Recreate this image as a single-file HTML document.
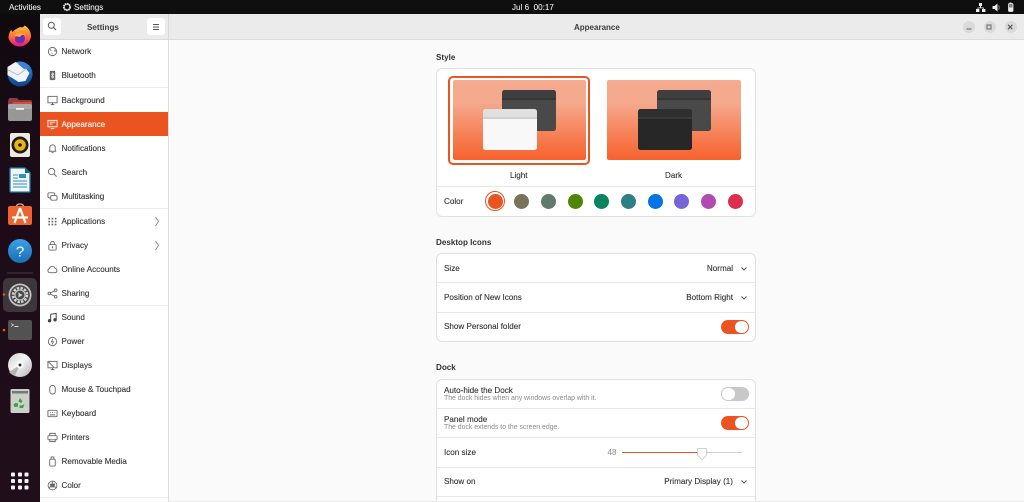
<!DOCTYPE html>
<html><head><meta charset="utf-8"><title>Settings</title>
<style>
html,body{margin:0;padding:0;width:1024px;height:502px;overflow:hidden;background:#fafafa}
body{position:relative;font-family:"Liberation Sans",sans-serif;font-size:8.1px;color:#333;filter:blur(.3px)}
.a{position:absolute}
.t{position:absolute;white-space:nowrap;line-height:12px;margin-top:.5px;-webkit-text-stroke:.12px currentColor}
.b{font-weight:bold;-webkit-text-stroke:0}
.line{position:absolute;background:#e6e6e6;height:1px}
.card{position:absolute;left:436px;width:320px;background:#fff;border:1px solid #e0e0e0;border-radius:6px;box-sizing:border-box}
.dot{position:absolute;width:15px;height:15px;border-radius:50%;top:194px}
.tog{position:absolute;left:721px;width:27.5px;height:14.5px;border-radius:8px;background:#e95420}
.tog i{position:absolute;right:1px;top:1px;width:12.5px;height:12.5px;border-radius:50%;background:#fff}
.tog.off{background:#c8c8c8}
.tog.off i{right:auto;left:1px}
.ic{position:absolute;left:47px;width:11px;height:11px;margin-top:.5px;fill:none;stroke:#6a6a6a;stroke-width:1}
.ch{position:absolute;width:8px;height:6px;fill:none;stroke:#555;stroke-width:1}
.thumb{position:absolute;top:80px;height:80px;width:133.5px;border-radius:2px;background:linear-gradient(#f5ab90 0,#f5a98d 28%,#f7632f 98%)}
.win{position:absolute;width:53.5px;height:41px;border-radius:2.5px;box-sizing:border-box}
</style></head><body>

<div class="a" style="left:0;top:0;width:1024px;height:14px;background:#0f0f10"></div>
<div class="t" style="left:9px;top:1px;color:#e4e4e4">Activities</div>
<svg class="a" style="left:62px;top:2px" width="10" height="10" viewBox="0 0 10 10"><circle cx="5" cy="5" r="3.2" fill="none" stroke="#ddd" stroke-width="1.8" stroke-dasharray="1.5 .6"/><circle cx="5" cy="5" r="2.8" fill="none" stroke="#ddd" stroke-width=".8"/></svg>
<div class="t" style="left:74px;top:1px;color:#e4e4e4">Settings</div>
<div class="t" style="left:512px;top:1px;color:#e4e4e4">Jul 6&nbsp; 00:17</div>
<svg class="a" style="left:975px;top:2px" width="40" height="11" viewBox="0 0 40 11"><g fill="#eee"><rect x="4" y="1" width="3" height="3"/><rect x="1" y="7" width="3.4" height="3"/><rect x="7" y="7" width="3.4" height="3"/><path d="M5 4h1v1.500h2.700v2H8V6.300H3.300v1.200H2.600v-2H5z"/><path d="M17.500 4h2l3-2.500v8l-3-2.500h-2z"/></g><path d="M23.500 3.500a3 3 0 0 1 0 4" stroke="#888" fill="none"/><rect x="34.500" y="0.500" width="2" height="1.500" fill="#ccc"/><rect x="33.500" y="1.500" width="4.500" height="8" rx="1" fill="#888" stroke="#eee" stroke-width=".8"/><rect x="33.800" y="5.500" width="3.900" height="4" fill="#eee"/></svg>

<div class="a" style="left:0;top:14px;width:40px;height:488px;background:linear-gradient(#0f0a0e,#1c0c18 30%,#200e1a)"></div>

<svg class="a" style="left:0;top:14px" width="40" height="488" viewBox="0 14 40 488">
 <defs>
  <linearGradient id="ff" x1="0" y1="0" x2="0" y2="1"><stop offset="0" stop-color="#ffc53a"/><stop offset=".5" stop-color="#ff7139"/><stop offset="1" stop-color="#e31587"/></linearGradient>
  <linearGradient id="tb" x1="0" y1="0" x2="0" y2="1"><stop offset="0" stop-color="#2f8fe6"/><stop offset="1" stop-color="#123f86"/></linearGradient>
  <linearGradient id="hp" x1="0" y1="0" x2="0" y2="1"><stop offset="0" stop-color="#3aa0e8"/><stop offset="1" stop-color="#1a6db5"/></linearGradient>
  <linearGradient id="cd" x1="0" y1="0" x2="1" y2="1"><stop offset="0" stop-color="#cfcfcf"/><stop offset=".45" stop-color="#f4f4f4"/><stop offset="1" stop-color="#b5b5b5"/></linearGradient>
 </defs>
 <path d="M20 27c2 1 4 0 4.500-1.500 3 1.500 6.500 5 6.500 11A11.500 11.500 0 0 1 8.500 38c0-3 1-6.500 3-8.500 0 1.500.5 2 1.500 2.500.5-2 3.500-3 7-5z" fill="url(#ff)"/>
 <circle cx="20" cy="38.500" r="5" fill="#6a2fb5"/>
 <path d="M14.500 36c2-3 8-4 11-.5-3-1.500-5 0-5.500 1.500z" fill="#ffb02e"/>

 <circle cx="20" cy="74" r="12.500" fill="url(#tb)"/>
 <path d="M7.500 67l8-5 10 6 4 5-4 8-7 1-11-7z" fill="#f1f3f7"/>
 <path d="M8 70l10 5 8-6" fill="none" stroke="#a9b6c8" stroke-width=".9"/>
 <path d="M18 64c5-2 9 0 11 4l-5 1z" fill="#3f7ed6"/>

 <path d="M8 104q0-6 2-6h7l2 2h11q2 0 2 2v6H8z" fill="#8d3a4c"/>
 <path d="M8 104h4l1-2h17q2 0 2 2v3H8z" fill="#d5512d"/>
 <rect x="8" y="104" width="24" height="17" rx="2" fill="#979797"/>
 <rect x="8" y="104" width="24" height="5" rx="2" fill="#a9a9a9"/>
 <rect x="16" y="108" width="8" height="1.800" fill="#f2f2f2"/>

 <rect x="10" y="133" width="20" height="24" rx="2" fill="#eeeadf"/>
 <circle cx="20" cy="145" r="8.500" fill="#1c1b14"/>
 <circle cx="20" cy="145" r="5.800" fill="#e8b611"/>
 <circle cx="20" cy="145" r="1.800" fill="#1c1b14"/>

 <path d="M11 168h14l5 5v18q0 1-1 1H11q-1 0-1-1v-22q0-1 1-1z" fill="#f2f6f9" stroke="#1c7db4" stroke-width="1.300"/>
 <path d="M25 168l5 5h-5z" fill="#16648f"/>
 <rect x="19" y="174" width="7" height="4" fill="#2e8fc4"/>
 <path d="M13 175h5M13 178h5M13 181h14M13 184h14M13 187h14" stroke="#2e8fc4" stroke-width="1.100"/>

 <path d="M16 208q0-4 4-4t4 4" fill="none" stroke="#d9b08f" stroke-width="1.200"/>
 <rect x="8" y="206" width="24" height="19" rx="2" fill="#ee6430"/>
 <path d="M20 208l-5.500 15M20 208l5.500 15M12 217.500h16" stroke="#fff" stroke-width="2.200" fill="none"/>

 <circle cx="20" cy="251" r="12" fill="url(#hp)"/>
 <text x="20" y="256.500" text-anchor="middle" font-family="Liberation Sans" font-size="15" fill="#fff">?</text>

 <rect x="7" y="272.500" width="26" height="1" fill="#4a3a45"/>

 <rect x="3" y="278" width="34" height="34" rx="5" fill="#3d373b"/>
 <circle cx="20" cy="295" r="11.500" fill="#c4c4c4"/>
 <circle cx="20" cy="295" r="9.800" fill="#4a4a4a"/>
 <circle cx="20" cy="295" r="7" fill="none" stroke="#d5d5d5" stroke-width="2.400" stroke-dasharray="2.400 1.300"/>
 <circle cx="20" cy="295" r="5" fill="#4a4a4a" stroke="#d5d5d5" stroke-width="1"/>
 <path d="M18.500 292.500l4 2.500-4 2.500z" fill="#d5d5d5"/>
 <circle cx="4" cy="294.500" r="1.300" fill="#e95420"/>

 <rect x="8" y="320" width="24" height="20" rx="2" fill="#525252"/>
 <path d="M11 323.500l2.500 1.500-2.500 1.500" fill="none" stroke="#eee" stroke-width=".7"/>
 <rect x="14.500" y="326" width="4" height=".9" fill="#eee"/>
 <circle cx="4" cy="330" r="1.300" fill="#e95420"/>

 <circle cx="20" cy="365" r="12" fill="url(#cd)"/>
 <path d="M20 365L9 372a13 13 0 0 0 6 4z" fill="#b4b4b4"/>
 <circle cx="20" cy="365" r="3.500" fill="#fff"/>
 <circle cx="20" cy="365" r="1.500" fill="#333"/>

 <rect x="10.500" y="389" width="19" height="24" rx="1.500" fill="#ccd0ca"/>
 <rect x="12" y="391" width="16" height="2.500" fill="#777"/>
 <path d="M20 398l2.500 3.500-1.500 1.500-2.500-1.500zM24.500 404l-1.500 4h-3.500v-2.500h2.500zM15.500 403l2.500.5v3l-3.500.5-1-2.500z" fill="#3aa037"/>

 <g fill="#f6f6f6"><rect x="11" y="472.500" width="4" height="4" rx="1"/><rect x="18" y="472.500" width="4" height="4" rx="1"/><rect x="24.500" y="472.500" width="4" height="4" rx="1"/><rect x="11" y="479" width="4" height="4" rx="1"/><rect x="18" y="479" width="4" height="4" rx="1"/><rect x="24.500" y="479" width="4" height="4" rx="1"/><rect x="11" y="485.500" width="4" height="4" rx="1"/><rect x="18" y="485.500" width="4" height="4" rx="1"/><rect x="24.500" y="485.500" width="4" height="4" rx="1"/></g>
</svg>

<!-- sidebar -->
<div class="a" style="left:40px;top:14px;width:128px;height:488px;background:#fff"></div>
<div class="a" style="left:168px;top:14px;width:1px;height:488px;background:#dedede"></div>
<div class="a" style="left:40px;top:14px;width:984px;height:26px;background:#ebebeb;border-bottom:1px solid #dcdcdc;box-sizing:border-box"></div>
<div class="a" style="left:168px;top:14px;width:1px;height:26px;background:#d8d8d8"></div>

<div class="a" style="left:43px;top:18px;width:18px;height:17px;background:#fff;border-radius:3px"></div>
<svg class="a" style="left:47px;top:21px" width="10" height="10" viewBox="0 0 10 10"><circle cx="4.300" cy="4.300" r="3" fill="none" stroke="#555" stroke-width="1"/><path d="M6.500 6.500L9 9" stroke="#555" stroke-width="1.100"/></svg>
<div class="t b" style="left:87px;top:21px;color:#3d3d3d">Settings</div>
<div class="a" style="left:147px;top:18px;width:18px;height:17px;background:#fff;border-radius:3px"></div>
<svg class="a" style="left:152px;top:22.500px" width="8" height="8" viewBox="0 0 8 8"><path d="M1 1.500h6M1 4h6M1 6.500h6" stroke="#555" stroke-width="1"/></svg>

<div class="t b" style="left:574px;top:21px;color:#3d3d3d;font-size:8px">Appearance</div>

<div class="a" style="left:963px;top:21px;width:12px;height:12px;border-radius:50%;background:#dadada"></div>
<div class="a" style="left:984px;top:21px;width:12px;height:12px;border-radius:50%;background:#dadada"></div>
<div class="a" style="left:1005px;top:21px;width:12px;height:12px;border-radius:50%;background:#dadada"></div>
<svg class="a" style="left:963px;top:21px" width="54" height="12" viewBox="0 0 54 12"><path d="M3.500 8h5" stroke="#666" stroke-width="1"/><rect x="24" y="4" width="4" height="4" fill="none" stroke="#666" stroke-width="1"/><path d="M45 3.800l4.400 4.400M49.400 3.800L45 8.200" stroke="#555" stroke-width="1.100"/></svg>

<div class="a" style="left:40px;top:112px;width:128px;height:24px;background:#e95420"></div>
<div class="line" style="left:40px;top:87px;width:128px;background:#ededed"></div>
<div class="line" style="left:40px;top:208px;width:128px;background:#ededed"></div>
<div class="line" style="left:40px;top:305px;width:128px;background:#ededed"></div>
<div class="line" style="left:40px;top:497px;width:128px;background:#ededed"></div>

<div class="t" style="left:61.500px;top:45.500px">Network</div>
<div class="t" style="left:61.500px;top:69.500px">Bluetooth</div>
<div class="t" style="left:61.500px;top:94px">Background</div>
<div class="t" style="left:61.500px;top:118px;color:#fff">Appearance</div>
<div class="t" style="left:61.500px;top:142px">Notifications</div>
<div class="t" style="left:61.500px;top:166px">Search</div>
<div class="t" style="left:61.500px;top:190px">Multitasking</div>
<div class="t" style="left:61.500px;top:215px">Applications</div>
<div class="t" style="left:61.500px;top:239px">Privacy</div>
<div class="t" style="left:61.500px;top:263px">Online Accounts</div>
<div class="t" style="left:61.500px;top:287px">Sharing</div>
<div class="t" style="left:61.500px;top:311px">Sound</div>
<div class="t" style="left:61.500px;top:335px">Power</div>
<div class="t" style="left:61.500px;top:359px">Displays</div>
<div class="t" style="left:61.500px;top:383px">Mouse &amp; Touchpad</div>
<div class="t" style="left:61.500px;top:407px">Keyboard</div>
<div class="t" style="left:61.500px;top:431px">Printers</div>
<div class="t" style="left:61.500px;top:455px">Removable Media</div>
<div class="t" style="left:61.500px;top:479px">Color</div>

<svg class="ic" style="top:45.500px" viewBox="0 0 12 12"><circle cx="6" cy="6" r="4.500"/><path d="M3 3l2 1.500-1 2 2 1v2.500M7 2l1 2 2.500.5-2 2.500" fill="#6a6a6a" stroke="none" opacity=".8"/></svg>
<svg class="ic" style="top:69.500px" viewBox="0 0 12 12"><rect x="3" y="1" width="6" height="10" rx="1" fill="#666" stroke="none"/><path d="M4.500 4l3 3.500L6 9V3l1.500 1.500L4.500 8" stroke="#fff" stroke-width=".6"/></svg>
<svg class="ic" style="top:94px" viewBox="0 0 12 12"><rect x="1" y="1.500" width="10" height="7"/><path d="M4 10.500h4M6 8v2" /></svg>
<svg class="ic" style="top:118px;stroke:#fff" viewBox="0 0 12 12"><rect x="1" y="1.500" width="10" height="7"/><path d="M4 10.500h4M3 3.500h6M3 5.500h3"/></svg>
<svg class="ic" style="top:142px" viewBox="0 0 12 12"><path d="M3 8.500V5a3 3 0 0 1 6 0v3.500l1 .5H2zM5 10.500h2"/></svg>
<svg class="ic" style="top:166px" viewBox="0 0 12 12"><circle cx="5" cy="5" r="3.500"/><path d="M7.500 7.500l3 3"/></svg>
<svg class="ic" style="top:190px" viewBox="0 0 12 12"><rect x="1" y="2" width="7.500" height="5.500" rx="1.500"/><rect x="4" y="5" width="7" height="5" rx="1.500" fill="#fff"/></svg>
<svg class="ic" style="top:215px" viewBox="0 0 12 12"><g fill="#666" stroke="none"><rect x="1.500" y="2" width="1.800" height="1.800"/><rect x="5" y="2" width="1.800" height="1.800"/><rect x="8.500" y="2" width="1.800" height="1.800"/><rect x="1.500" y="5.200" width="1.800" height="1.800"/><rect x="5" y="5.200" width="1.800" height="1.800"/><rect x="8.500" y="5.200" width="1.800" height="1.800"/><rect x="1.500" y="8.400" width="1.800" height="1.800"/><rect x="5" y="8.400" width="1.800" height="1.800"/><rect x="8.500" y="8.400" width="1.800" height="1.800"/></g></svg>
<svg class="ic" style="top:239px" viewBox="0 0 12 12"><rect x="2" y="5" width="8" height="6" rx="1"/><path d="M4 5V3.500a2 2 0 0 1 4 0V5"/><rect x="5.300" y="7" width="1.400" height="2" fill="#666" stroke="none"/></svg>
<svg class="ic" style="top:263px" viewBox="0 0 12 12"><path d="M3 9.500a2.300 2.300 0 0 1-.3-4.500A3.200 3.200 0 0 1 8.800 4.800 2.400 2.400 0 0 1 9 9.500z"/></svg>
<svg class="ic" style="top:287px" viewBox="0 0 12 12"><circle cx="9.500" cy="2.500" r="1.400"/><circle cx="9.500" cy="9.500" r="1.400"/><circle cx="2.500" cy="6" r="1.400"/><path d="M3.800 5.300l4.500-2.200M3.800 6.700l4.500 2.200"/></svg>
<svg class="ic" style="top:311px;stroke-width:1.100;stroke:#444" viewBox="0 0 12 12"><path d="M4 9.500V2.500l6-1v7"/><circle cx="2.800" cy="9.500" r="1.300" fill="#444"/><circle cx="8.800" cy="8.500" r="1.300" fill="#444"/></svg>
<svg class="ic" style="top:335px" viewBox="0 0 12 12"><circle cx="6" cy="6" r="4.500"/><path d="M6.500 3L4.800 6.300h2.400L5.500 9" stroke-width=".9"/></svg>
<svg class="ic" style="top:359px" viewBox="0 0 12 12"><rect x="1" y="1.500" width="10" height="7"/><path d="M1.500 2l6 6" /><path d="M4 10.500h4M6 8.500v2"/></svg>
<svg class="ic" style="top:383px" viewBox="0 0 12 12"><rect x="3" y="1.500" width="6" height="9.500" rx="3"/></svg>
<svg class="ic" style="top:407px" viewBox="0 0 12 12"><rect x="1" y="2.500" width="10" height="7" rx="1"/><path d="M3 7.500h6M3 5h1M5.500 5h1M8 5h1"/></svg>
<svg class="ic" style="top:431px" viewBox="0 0 12 12"><rect x="1" y="4" width="10" height="4.500" rx="1"/><path d="M3 4V1.500h6V4M3 7.500V10.500h6V7.500"/></svg>
<svg class="ic" style="top:455px" viewBox="0 0 12 12"><rect x="3" y="3.500" width="6" height="7.500" rx="1"/><path d="M4.500 3.500V1h3v2.500"/></svg>
<svg class="ic" style="top:479px" viewBox="0 0 12 12"><circle cx="6" cy="6" r="4.800"/><path d="M6 1.500V6L2 8.500M6 6l4 2.500" /><path d="M3 4h6l-1 4H4z" fill="#666" stroke="none"/></svg>

<svg class="a" style="left:154px;top:215.500px" width="6" height="11" viewBox="0 0 6 11"><path d="M1.500 1L4.500 5.500 1.500 10" fill="none" stroke="#888" stroke-width=".9"/></svg>
<svg class="a" style="left:154px;top:239.500px" width="6" height="11" viewBox="0 0 6 11"><path d="M1.500 1L4.500 5.500 1.500 10" fill="none" stroke="#888" stroke-width=".9"/></svg>

<!-- Style -->
<div class="t b" style="left:436px;top:51px">Style</div>
<div class="card" style="top:68px;height:148.500px"></div>
<div class="a" style="left:448px;top:76px;width:142px;height:88.500px;border:2px solid #e95420;border-radius:5px;box-sizing:border-box"></div>
<div class="thumb" style="left:452.500px"></div>
<div class="thumb" style="left:607px"></div>
<div class="win" style="left:502px;top:90px;background:linear-gradient(#3f3f3f 0,#3f3f3f 20%,#363636 20%,#363636 24%,#494949 24%)"></div>
<div class="win" style="left:483px;top:109px;background:linear-gradient(#e0e0e0 0,#e0e0e0 20%,#d0d0d0 20%,#d0d0d0 25%,#f8f8f8 25%)"></div>
<div class="win" style="left:657px;top:90px;background:linear-gradient(#3f3f3f 0,#3f3f3f 20%,#363636 20%,#363636 24%,#494949 24%)"></div>
<div class="win" style="left:638px;top:109px;background:linear-gradient(#2f2f2f 0,#2f2f2f 20%,#3a3a3a 20%,#3a3a3a 25%,#272727 25%)"></div>
<div class="t" style="left:510px;top:169px">Light</div>
<div class="t" style="left:665px;top:169px">Dark</div>
<div class="line" style="left:437px;top:186px;width:318px"></div>
<div class="t" style="left:444px;top:195px">Color</div>
<div class="a" style="left:485px;top:191px;width:20px;height:20px;border:1.500px solid #e95420;border-radius:50%;box-sizing:border-box"></div>
<div class="dot" style="left:487.500px;top:193.500px;background:#e95420"></div>
<div class="dot" style="left:514.300px;background:#77745a"></div>
<div class="dot" style="left:540.800px;background:#62796d"></div>
<div class="dot" style="left:567.500px;background:#4e8505"></div>
<div class="dot" style="left:594.200px;background:#078560"></div>
<div class="dot" style="left:620.800px;background:#2d7f84"></div>
<div class="dot" style="left:647.500px;background:#0073e5"></div>
<div class="dot" style="left:674.200px;background:#7764d8"></div>
<div class="dot" style="left:700.800px;background:#b24bb0"></div>
<div class="dot" style="left:727.500px;background:#dd2e4f"></div>

<!-- Desktop icons -->
<div class="t b" style="left:436px;top:236px">Desktop Icons</div>
<div class="card" style="top:253px;height:89px"></div>
<div class="line" style="left:437px;top:282px;width:318px"></div>
<div class="line" style="left:437px;top:311.500px;width:318px"></div>
<div class="t" style="left:444px;top:262px">Size</div>
<div class="t" style="left:444px;top:291px">Position of New Icons</div>
<div class="t" style="left:444px;top:320.500px">Show Personal folder</div>
<div class="t" style="right:291px;top:262px">Normal</div>
<div class="t" style="right:291px;top:291px">Bottom Right</div>
<svg class="ch" style="left:740px;top:265.500px" viewBox="0 0 8 6"><path d="M1.500 1.500L4 4l2.500-2.500"/></svg>
<svg class="ch" style="left:740px;top:294.500px" viewBox="0 0 8 6"><path d="M1.500 1.500L4 4l2.500-2.500"/></svg>
<div class="tog" style="top:319.500px"><i></i></div>

<!-- Dock -->
<div class="t b" style="left:436px;top:361px">Dock</div>
<div class="card" style="top:378.500px;height:130px"></div>
<div class="line" style="left:437px;top:408px;width:318px"></div>
<div class="line" style="left:437px;top:437px;width:318px"></div>
<div class="line" style="left:437px;top:466.500px;width:318px"></div>
<div class="line" style="left:437px;top:496px;width:318px"></div>
<div class="t" style="left:444px;top:384px">Auto-hide the Dock</div>
<div class="t" style="left:444px;top:392.500px;color:#8a8a8a;font-size:6.900px;-webkit-text-stroke:0">The dock hides when any windows overlap with it.</div>
<div class="t" style="left:444px;top:413px">Panel mode</div>
<div class="t" style="left:444px;top:421.500px;color:#8a8a8a;font-size:6.900px;-webkit-text-stroke:0">The dock extends to the screen edge.</div>
<div class="t" style="left:444px;top:446.500px">Icon size</div>
<div class="t" style="left:444px;top:475.500px">Show on</div>
<div class="t" style="right:291px;top:475.500px">Primary Display (1)</div>
<svg class="ch" style="left:740px;top:479px" viewBox="0 0 8 6"><path d="M1.500 1.500L4 4l2.500-2.500"/></svg>
<div class="tog off" style="top:386.500px"><i></i></div>
<div class="tog" style="top:415.500px"><i></i></div>
<div class="t" style="left:607.500px;top:446.500px;color:#8a8a8a;-webkit-text-stroke:0">48</div>
<div class="a" style="left:622px;top:451.500px;width:120px;height:1.500px;background:#d0d0d0"></div>
<div class="a" style="left:622px;top:451.500px;width:80px;height:1.500px;background:#e95420"></div>
<svg class="a" style="left:695px;top:447px" width="14" height="15" viewBox="0 0 14 15"><path d="M2.500 1.500h9v6.500L7 13 2.500 8z" fill="#fff" stroke="#c4c4c4" stroke-width=".8" stroke-linejoin="round"/></svg>

<div class="a" style="left:169px;top:500.500px;width:855px;height:1.500px;background:#ececec"></div>
</body></html>
